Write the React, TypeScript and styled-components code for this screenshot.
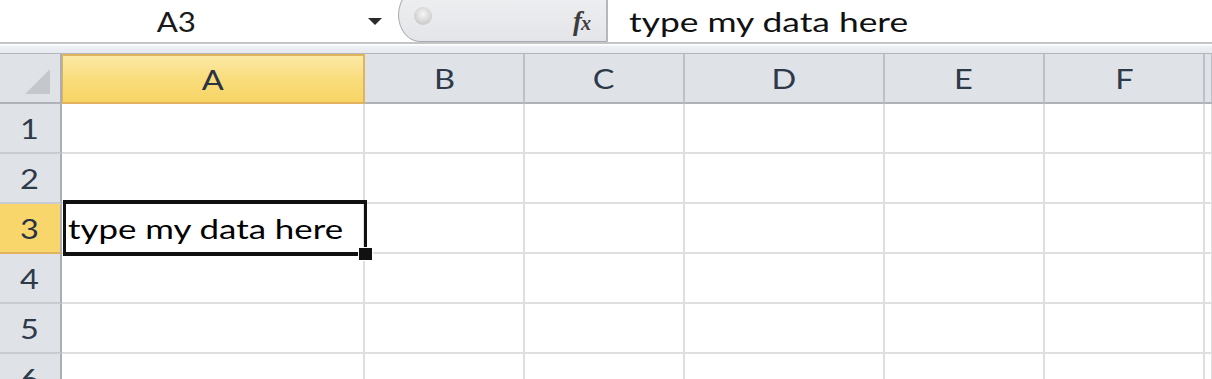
import styled, { createGlobalStyle, css } from "styled-components";

const GlobalStyle = createGlobalStyle`
  html, body {
    margin: 0;
    padding: 0;
    background: #ffffff;
    overflow: hidden;
  }
  body {
    font-family: Lato, "Liberation Sans", sans-serif;
  }
`;

const Sheet = styled.div`
  width: 1212px;
  height: 379px;
  overflow: hidden;
  background: #ffffff;
`;

// the screenshot is stretched sideways, so labels get a scaleX
const Label = styled.span<{ $stretch?: number; $origin?: string }>`
  display: inline-block;
  white-space: nowrap;
  transform: scaleX(${({ $stretch }) => $stretch ?? 1.25});
  transform-origin: ${({ $origin }) => $origin ?? "center"} center;
`;

/* formula bar */

const FormulaBar = styled.div`
  display: flex;
  height: 42px;
  background: #ffffff;
`;

const NameBox = styled.div`
  width: 352px;
  display: flex;
  align-items: center;
  justify-content: center;
  font-size: 26px;
  color: #1a1a1a;
  padding-top: 2px;
`;

const DropArrow = styled.div`
  width: 46px;
  display: flex;
  align-items: center;
  justify-content: center;

  &::after {
    content: "";
    border-left: 7px solid transparent;
    border-right: 7px solid transparent;
    border-top: 7px solid #2b2b2b;
    margin-top: 1px;
  }
`;

const Controls = styled.div`
  position: relative;
  width: 210px;
  height: 54px;
  margin-top: -12px;
  box-sizing: border-box;
  border: 1px solid #a7abb0;
  border-right: 2px solid #b4b8bd;
  border-radius: 22px 0 0 22px / 27px 0 0 27px;
  background: linear-gradient(#eef0f2, #e3e5e8);
  display: flex;
  align-items: center;
  justify-content: flex-end;
  padding: 12px 16px 0 0;
`;

const Knob = styled.div`
  position: absolute;
  left: 15px;
  top: 18px;
  width: 18px;
  height: 18px;
  border-radius: 50%;
  background: radial-gradient(circle at 50% 40%, #f6f6f6 0%, #d3d3d3 60%, #bcbcbc 100%);
`;

const Fx = styled.span`
  font-family: "Liberation Serif", serif;
  font-style: italic;
  font-weight: bold;
  font-size: 27px;
  color: #3d3d3d;
  letter-spacing: -1px;
  line-height: 1;

  small {
    font-size: 20px;
  }
`;

const FormulaInput = styled.div`
  flex: 1;
  display: flex;
  align-items: center;
  padding-left: 21px;
  padding-top: 2px;
  font-size: 26px;
  color: #111111;
`;

const Band = styled.div`
  height: 9px;
  border-top: 2px solid #c3c5c8;
  border-bottom: 1px solid #b3b6ba;
  background: linear-gradient(#ffffff 0, #ffffff 1px, #edf0f4 2px, #e6e9ee 100%);
`;

/* grid */

const Grid = styled.div`
  display: grid;
  grid-template-columns: 62px 303px 160px 160px 200px 160px 160px 1fr;
  grid-auto-rows: 50px;
`;

const headerBase = css`
  box-sizing: border-box;
  display: flex;
  align-items: center;
  justify-content: center;
  font-size: 26px;
  color: #2e3a4a;
  background: #dfe3e8;
  border-right: 2px solid #bcc1c7;
  border-bottom: 2px solid #aeb3b9;
  padding-top: 2px;
`;

const Corner = styled.div`
  ${headerBase};
  position: relative;
  border-right-color: #a9aeb5;

  &::after {
    content: "";
    position: absolute;
    right: 10px;
    bottom: 8px;
    border-left: 25px solid transparent;
    border-bottom: 25px solid #c4c8cd;
  }
`;

const ColHeader = styled.div<{ $active?: boolean }>`
  ${headerBase};
  ${({ $active }) =>
    $active &&
    css`
      background: linear-gradient(#fbe9a6, #f9dc7c 50%, #f7d565);
      border: 2px solid #e2b35e;
      border-left-width: 1px;
      color: #2a3343;
    `}
`;

const RowHeader = styled.div<{ $active?: boolean }>`
  ${headerBase};
  border-right-color: #a9aeb5;
  border-bottom-color: #c8ccd1;
  ${({ $active }) =>
    $active &&
    css`
      background: #f9d66b;
      border-bottom-color: #e2b35e;
      color: #2a3343;
    `}
`;

const Cell = styled.div`
  position: relative;
  box-sizing: border-box;
  background: #ffffff;
  border-right: 2px solid #dfdfdf;
  border-bottom: 2px solid #dfdfdf;
  font-size: 26px;
  color: #000000;
  display: flex;
  align-items: center;
  padding: 2px 0 0 6px;
  white-space: nowrap;
`;

const Selection = styled.div`
  position: absolute;
  left: 1px;
  top: -4px;
  width: 304px;
  height: 56px;
  box-sizing: border-box;
  border: 3px solid #111111;
  border-top-width: 4px;
  border-bottom-width: 4px;
  pointer-events: none;
  z-index: 2;
`;

const FillHandle = styled.div`
  position: absolute;
  left: 293px;
  top: 44px;
  width: 13px;
  height: 12px;
  background: #111111;
  box-shadow: 0 0 0 1px #ffffff;
`;

const columns = ["A", "B", "C", "D", "E", "F", ""];
const rows = [1, 2, 3, 4, 5, 6];
const activeCol = "A";
const activeRow = 3;
const value = "type my data here";

export default function App() {
  return (
    <Sheet>
      <GlobalStyle />
      <FormulaBar>
        <NameBox>
          <Label $stretch={1.2}>A3</Label>
        </NameBox>
        <DropArrow />
        <Controls>
          <Knob />
          <Fx>
            f<small>x</small>
          </Fx>
        </Controls>
        <FormulaInput>
          <Label $stretch={1.36} $origin="left">
            {value}
          </Label>
        </FormulaInput>
      </FormulaBar>
      <Band />
      <Grid>
        <Corner />
        {columns.map((c, i) => (
          <ColHeader key={`h${i}`} $active={c === activeCol}>
            <Label>{c}</Label>
          </ColHeader>
        ))}
        {rows.map((r) => (
          <>
            <RowHeader key={`r${r}`} $active={r === activeRow}>
              <Label>{r}</Label>
            </RowHeader>
            {columns.map((c, i) => {
              const isActive = r === activeRow && c === activeCol;
              return (
                <Cell key={`${r}-${i}`}>
                  {isActive && (
                    <>
                      <Label $stretch={1.34} $origin="left">
                        {value}
                      </Label>
                      <Selection>
                        <FillHandle />
                      </Selection>
                    </>
                  )}
                </Cell>
              );
            })}
          </>
        ))}
      </Grid>
    </Sheet>
  );
}
